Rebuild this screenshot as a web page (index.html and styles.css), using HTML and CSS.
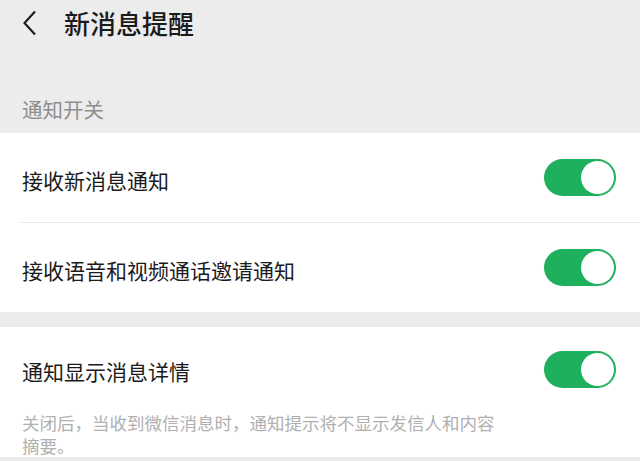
FILE: index.html
```html
<!DOCTYPE html>
<html lang="zh-CN">
<head>
    <meta charset="UTF-8">
    <meta name="viewport" content="width=device-width, initial-scale=1.0">
    <title>新消息提醒</title>
    <link rel="stylesheet" href="styles.css">
</head>
<body>
    <div class="header">
        <svg class="back" width="16" height="26" viewBox="0 0 16 26">
            <polyline points="13,1.5 2.5,13 13,24.5" fill="none" stroke="#1a1a1a" stroke-width="2.1"/>
        </svg>
        <h1>新消息提醒</h1>
    </div>

    <div class="section-title">通知开关</div>

    <div class="card">
        <div class="row">
            <span>接收新消息通知</span>
            <div class="switch on"><div class="knob"></div></div>
        </div>
        <div class="row">
            <span>接收语音和视频通话邀请通知</span>
            <div class="switch on"><div class="knob"></div></div>
        </div>
    </div>

    <div class="card card-gap">
        <div class="row row-tight">
            <span>通知显示消息详情</span>
            <div class="switch on"><div class="knob"></div></div>
        </div>
        <p class="desc">关闭后，当收到微信消息时，通知提示将不显示发信人和内容摘要。</p>
    </div>
</body>
</html>
```

FILE: styles.css
```css
body {
    margin: 0;
    background: #ececec;
    font-family: "Noto Sans CJK SC", "Noto Sans", sans-serif;
    color: #1b1b1b;
    overflow: hidden;
}
.header {
    height: 45px;
    display: flex;
    align-items: center;
    padding-left: 22px;
}
.back {
    display: block;
    margin-right: 26px;
}
.header h1 {
    margin: 0;
    font-size: 26px;
    font-weight: 500;
    line-height: 45px;
}
.section-title {
    margin-top: 50px;
    padding: 0 22px 10px;
    line-height: 28px;
    font-size: 20.5px;
    color: #8e8e8e;
}
.card {
    background: #fff;
}
.card-gap {
    margin-top: 15px;
}
.row {
    height: 89px;
    display: flex;
    align-items: center;
    justify-content: space-between;
    padding: 0 24px 0 22px;
    font-size: 21px;
}
.row + .row {
    border-top: 1px solid #e8e8e8;
    margin-left: 20px;
    padding-left: 2px;
}
.row span {
    padding-top: 4px;
}
.row-tight {
    height: 84px;
}
.switch {
    width: 72px;
    height: 37px;
    border-radius: 19px;
    background: #d6d6d6;
    padding: 2px;
    box-sizing: border-box;
    display: flex;
    justify-content: flex-start;
}
.switch.on {
    background: #1fb05e;
    justify-content: flex-end;
}
.knob {
    width: 33px;
    height: 33px;
    border-radius: 50%;
    background: #fff;
}
.desc {
    margin: 0;
    padding: 0 136px 0 22px;
    font-size: 17.5px;
    line-height: 23px;
    color: #b0b0b0;
}
```
